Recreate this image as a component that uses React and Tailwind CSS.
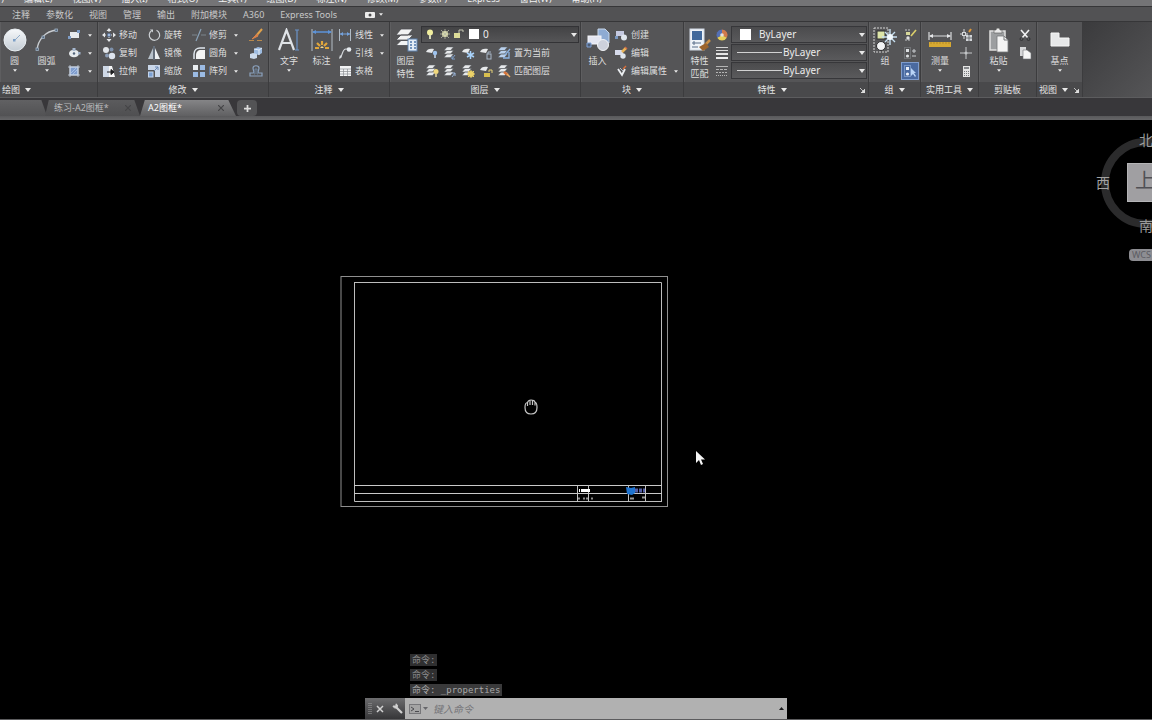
import React from 'react';
import clsx from 'clsx';

const menus = [
  '文件(F)', '编辑(E)', '视图(V)', '插入(I)', '格式(O)', '工具(T)', '绘图(D)',
  '标注(N)', '修改(M)', '参数(P)', 'Express', '窗口(W)', '帮助(H)',
];

const ribbonTabs = ['注释', '参数化', '视图', '管理', '输出', '附加模块', 'A360', 'Express Tools'];

/* ---------- shared bits ---------- */

function Arrow({ small = false, className }) {
  return (
    <svg viewBox="0 0 6 4" className={clsx('shrink-0', small ? 'w-1 h-[3px]' : 'w-[6px] h-1', className)}>
      <path d="M0 0h6L3 4z" fill="#e8e8e8" />
    </svg>
  );
}

function Icon({ children, className }) {
  return (
    <svg viewBox="0 0 14 14" className={clsx('w-[14px] h-[14px] shrink-0', className)} fill="none">
      {children}
    </svg>
  );
}

function Panel({ title, className, arrow = true, launcher = false, start = false, children }) {
  return (
    <section
      className={clsx(
        'flex flex-col shrink-0 border-r border-[#3c3c3e] shadow-[inset_1px_0_0_#5e5e60]',
        className
      )}
    >
      <div className="flex h-[60px] pt-1">{children}</div>
      <div
        className={clsx(
          'relative flex items-center gap-[5px] h-[15px] bg-[#49494b] text-[#e4e4e4] whitespace-nowrap',
          start ? 'pl-[2px]' : 'justify-center',
          launcher && !start && 'pr-2'
        )}
      >
        <span>{title}</span>
        {arrow && <Arrow />}
        {launcher && (
          <svg viewBox="0 0 5 5" className="absolute right-[3px] top-[6px] w-[5px] h-[5px]">
            <path d="M0 0l3 3M5 1v4H1z" stroke="#ddd" fill="#ddd" strokeWidth=".8" />
          </svg>
        )}
      </div>
    </section>
  );
}

function Big({ icon, label, label2, arrow = false, className }) {
  return (
    <button type="button" className={clsx('flex flex-col items-center shrink-0 leading-[13px] whitespace-nowrap', className)}>
      <span className="flex items-center justify-center h-7">{icon}</span>
      <span>{label}</span>
      {label2 && <span>{label2}</span>}
      {arrow && <Arrow small className="mt-[2px]" />}
    </button>
  );
}

function Small({ icon, label, arrow = false, name, active = false, className }) {
  return (
    <button
      type="button"
      aria-label={label || name}
      className={clsx(
        'flex items-center h-[18px] gap-[3px] whitespace-nowrap',
        active && 'bg-[#4a6aa0] shadow-[inset_0_0_0_1px_#7f9ccc]',
        className
      )}
    >
      {icon}
      {label && <span>{label}</span>}
      {arrow && <Arrow small className="ml-1" />}
    </button>
  );
}

/* ---------- draw + modify icons ---------- */

const circleIcon = (
  <svg viewBox="0 0 24 24" className="w-6 h-6" fill="none">
    <defs>
      <linearGradient id="ball" x1="0" y1="0" x2="0" y2="1">
        <stop offset="0" stopColor="#f6f8fa" />
        <stop offset="1" stopColor="#c3ccd4" />
      </linearGradient>
    </defs>
    <circle cx="12" cy="12" r="11" fill="url(#ball)" stroke="#e8eef2" />
    <path d="M11 13l6-6" stroke="#8fabc9" strokeWidth="1" />
    <rect x="10" y="11" width="2.500" height="2.500" fill="#7d9fc6" />
  </svg>
);

const arcIcon = (
  <svg viewBox="0 0 24 24" className="w-6 h-6" fill="none">
    <path d="M2 22C3 12 10 3 22 2" stroke="#c9cdd1" strokeWidth="1.400" />
    <g fill="#55677c" stroke="#9fb2c6" strokeWidth=".8">
      <rect x="1" y="20" width="2.500" height="2.500" />
      <rect x="7" y="8" width="2.500" height="2.500" />
      <rect x="20" y="1" width="2.500" height="2.500" />
    </g>
  </svg>
);

const rectIcon = (
  <Icon>
    <rect x="3" y="4" width="9" height="6" fill="#e6eaee" />
    <rect x="1" y="8" width="3" height="3" fill="#7d9cc6" />
    <rect x="10" y="2" width="3" height="3" fill="#7d9cc6" />
  </Icon>
);

const ellipseIcon = (
  <Icon>
    <ellipse cx="7" cy="7.500" rx="5" ry="3.800" fill="#e6eaee" />
    <circle cx="7" cy="7.500" r="1.200" fill="#51647a" />
    <rect x="5.500" y="2" width="3" height="3" fill="#a6b8cf" />
    <rect x="11" y="6" width="2.500" height="2.500" fill="#a6b8cf" />
  </Icon>
);

const hatchIcon = (
  <Icon>
    <rect x="3" y="3" width="8" height="8" fill="#7f9dce" stroke="#d3def0" />
    <path d="M4 9l5-5M6 10l4-4" stroke="#a6bee4" />
    <path d="M1 3h12M1 11h12M3 1v12M11 1v12" stroke="#c5d0e0" strokeWidth=".8" />
  </Icon>
);

const moveIcon = (
  <Icon>
    <path d="M7 0l2.500 3h-5zM7 14l2.500-3h-5zM0 7l3-2.500v5zM14 7l-3-2.500v5z" fill="#e8eaec" />
    <path d="M7 2v10M2 7h10" stroke="#dcdfe2" strokeDasharray="2 1" />
    <rect x="5.500" y="5.500" width="3" height="3" fill="#9fb9dd" stroke="#4d5f7b" strokeWidth=".7" />
  </Icon>
);

const rotateIcon = (
  <Icon>
    <path d="M4.500 2.800A5.200 5.200 0 1 0 9.500 2.300" stroke="#ced2d6" strokeWidth="1.200" />
    <path d="M3 1.500h3v3z" fill="#ced2d6" />
  </Icon>
);

const trimIcon = (
  <Icon>
    <path d="M0 7h5M9 7h5" stroke="#7c858e" strokeWidth="1.200" />
    <path d="M4 13L9 1" stroke="#8aa2b8" strokeWidth="1.200" />
  </Icon>
);

const copyIcon = (
  <Icon>
    <circle cx="4" cy="4" r="3" fill="#e3e6ea" />
    <circle cx="9.500" cy="3.500" r="2" fill="#7e91ab" />
    <circle cx="10" cy="10" r="3.200" fill="#dde4ee" />
    <circle cx="5" cy="9.500" r="2" fill="#8c9db5" />
  </Icon>
);

const mirrorIcon = (
  <Icon>
    <path d="M6 2v11H1z" fill="#b8c2cc" />
    <path d="M8 2v11h5z" fill="#eef1f4" />
    <path d="M7 0v14" stroke="#7f97b5" strokeWidth=".8" />
  </Icon>
);

const filletIcon = (
  <Icon>
    <path d="M2 13V8c0-4 3-6 6-6h5" stroke="#dfe6ee" strokeWidth="1.500" />
    <path d="M4 13V9c0-3 2-5 5-5h4v9z" fill="#f3f4f5" />
  </Icon>
);

const stretchIcon = (
  <Icon>
    <path d="M1 2h6v11H1z" fill="#ced8e6" />
    <path d="M7 2h3l3 11H7z" fill="#f7f7f7" />
    <path d="M5 8h4M9 5.500L12 8l-3 2.500z" stroke="#1d1d1f" fill="#1d1d1f" />
  </Icon>
);

const scaleIcon = (
  <Icon>
    <path d="M1 1h12v12H8V6H1z" fill="#c9d6e8" />
    <rect x="1.500" y="8" width="4.500" height="5" fill="#7ba0d2" stroke="#c4d5ec" />
    <path d="M7 7l4-4M8 3h3v3" stroke="#6a88b4" />
  </Icon>
);

const arrayIcon = (
  <Icon>
    <rect x="1" y="1" width="5" height="5" fill="#e8ecf0" />
    <rect x="8" y="1" width="5" height="5" fill="#9bbbe4" />
    <rect x="1" y="8" width="5" height="5" fill="#9bbbe4" />
    <rect x="8" y="8" width="5" height="5" fill="#9bbbe4" />
  </Icon>
);

const brushIcon = (
  <Icon>
    <path d="M13 1L7 8" stroke="#e0a24c" strokeWidth="2" />
    <path d="M8 6L3 11l6-3z" fill="#d9824a" stroke="#d9824a" />
    <path d="M0 12.500h5M8 12.500h5" stroke="#b8894d" />
  </Icon>
);

const explodeIcon = (
  <Icon>
    <path d="M5 3l4-2 4 1v5l-3 2-5-1z" fill="#9dbbe0" />
    <path d="M5 3l5 1v5M10 4l3-2" stroke="#e3edf8" />
    <path d="M1 8l3-1 4 1v4l-3 1-4-1z" fill="#cbdaec" />
  </Icon>
);

const offsetIcon = (
  <Icon>
    <path d="M1 12V9h3c2 0 0-3 0-5 0-3 6-3 6 0 0 2-2 5 0 5h3v3z" stroke="#8ba2be" strokeWidth="1.200" />
    <path d="M5 10h1V5h2v5h1" stroke="#6f839c" />
  </Icon>
);

/* ---------- annotate icons ---------- */

const textIcon = (
  <svg viewBox="0 0 24 24" className="w-6 h-6" fill="none">
    <path d="M2 22L9.500 2 17 22M5 15h9" stroke="#dfe3e7" strokeWidth="2.200" />
    <path d="M20 2v20M18 2h4M18 22h4" stroke="#6b93c9" strokeWidth="1.200" />
  </svg>
);

const dimIcon = (
  <svg viewBox="0 0 24 24" className="w-6 h-6" fill="none">
    <path d="M2 1v22M22 1v22" stroke="#a5adb5" strokeWidth="1.200" />
    <path d="M3 4h18" stroke="#5d93d8" strokeWidth="1.500" />
    <path d="M2 4l4-2v4zM22 4l-4-2v4z" fill="#5d93d8" />
    <path d="M12 13v4M7 15l3 3M17 15l-3 3M5 20h4M15 20h4" stroke="#e0a63c" strokeWidth="2.200" />
    <path d="M10 20l2-2 2 2z" fill="#f4d88c" />
  </svg>
);

const linearIcon = (
  <Icon>
    <path d="M1.500 1v12M12.500 1v12" stroke="#b0bbc6" />
    <path d="M2 6h10" stroke="#74a2dc" />
    <path d="M2 6l3-2v4zM12 6L9 4v4z" fill="#74a2dc" />
  </Icon>
);

const leaderIcon = (
  <Icon>
    <path d="M2 12C5 9 4 3 8 3h2" stroke="#d6dade" strokeWidth="1.200" />
    <path d="M1 13l1-4 2 2z" fill="#d6dade" />
    <circle cx="11" cy="3.500" r="2.300" fill="#e7ecf1" />
  </Icon>
);

const tableIcon = (
  <Icon>
    <rect x="2" y="2" width="11" height="10" fill="#f2f3f4" />
    <path d="M2 5h11M2 7.500h11M2 10h11M5.500 5v7M9.500 5v7" stroke="#8b8e92" strokeWidth=".7" />
  </Icon>
);

/* ---------- layer icons ---------- */

function Sheets({ fill = '#e7e9eb', children }) {
  return (
    <Icon>
      <path
        d="M4 1h6.500L7.500 4.500H1zM4 4.500h6.500l-3 3.500H1zM4 8h6.500l-3 3.500H1z"
        fill={fill}
        stroke="#55585c"
        strokeWidth=".5"
      />
      {children}
    </Icon>
  );
}

function Sheet({ children }) {
  return (
    <Icon>
      <path d="M1 6c1-3 4-4 8-3l-2 4z" fill="#e7e9eb" />
      {children}
    </Icon>
  );
}

const layerPropsIcon = (
  <svg viewBox="0 0 24 24" className="w-6 h-6" fill="none">
    <path
      d="M7 1h12l-5 6H2zM7 7h12l-5 5H2zM7 12.500h12l-5 5H2z"
      fill="#f1f2f3"
      stroke="#4b4c50"
      strokeWidth=".8"
    />
    <rect x="14" y="11" width="9" height="12" fill="#e3ecf6" stroke="#5f82ae" />
    <path d="M16 14h2M16 17h2M16 20h2M20 14h2M20 17h2M20 20h2" stroke="#4d75aa" strokeWidth="1.600" />
  </svg>
);

const layerTools = [
  {
    name: '关',
    icon: <Sheet><circle cx="10" cy="7" r="2.200" fill="#9ec3ee" /><path d="M10 9v3" stroke="#c7d9ee" strokeWidth="1.500" /></Sheet>,
  },
  { name: '隔离', icon: <Sheets><path d="M12 9l-3 4M9 10v3h3" stroke="#7f9fc9" /></Sheets> },
  {
    name: '冻结',
    icon: <Sheet><path d="M9.500 5v8M6 7l7 4M13 7l-7 4" stroke="#a8d2fa" strokeWidth="1.500" /></Sheet>,
  },
  {
    name: '锁定',
    icon: <Sheet><rect x="8" y="8" width="4" height="5" stroke="#a9b8c9" /><path d="M9 8V6h3" stroke="#a9b8c9" /></Sheet>,
  },
];

const layerTools2 = [
  {
    name: '打开所有图层',
    icon: <Sheets><circle cx="11" cy="7.500" r="2.500" fill="#f1d87c" /><path d="M11 10v3" stroke="#e6d9a3" strokeWidth="1.500" /></Sheets>,
  },
  { name: '取消隔离', icon: <Sheets><path d="M9 13l3-4M9 9h3v3" stroke="#9bb5d8" /></Sheets> },
  {
    name: '解冻所有图层',
    icon: <Sheets><circle cx="10" cy="10" r="3" fill="#ecd269" /><path d="M10 6v8M6 10h8M7 7l6 6M13 7l-6 6" stroke="#ecd269" /></Sheets>,
  },
  {
    name: '解锁',
    icon: <Sheet><path d="M5 13h6V9H5z" fill="#d8be4e" /><path d="M10 8V6h3v3" stroke="#e7d378" /></Sheet>,
  },
];

const setCurrentIcon = (
  <Sheets fill="#b9d0ec">
    <path d="M6 12h6V6M8 9l5-6" stroke="#8cb4e4" strokeWidth="1.300" />
  </Sheets>
);

const matchLayerIcon = (
  <Sheets>
    <path d="M7 8l4 3" stroke="#d8743a" strokeWidth="2.500" />
    <path d="M10 10l3 3" stroke="#e9b06b" strokeWidth="1.500" />
  </Sheets>
);

/* ---------- block + property icons ---------- */

const insertIcon = (
  <svg viewBox="0 0 24 24" className="w-6 h-6" fill="none">
    <path d="M12 1h7l4 4v10H12z" fill="#8eabd3" stroke="#c6d6ea" />
    <rect x="2" y="8" width="13" height="8" fill="#e4e6f1" stroke="#f5f6fa" />
    <circle cx="17" cy="17" r="5.500" fill="#cdd1dc" stroke="#f1f3f6" />
    <path d="M1 15h4v4H1z" fill="#4d5c74" stroke="#7fa2d8" />
  </svg>
);

const createIcon = (
  <Icon>
    <rect x="2" y="3" width="8" height="5" fill="#c5c9e0" />
    <circle cx="10" cy="9.500" r="3" fill="#e0e6ee" />
    <rect x="1" y="8" width="3" height="3" fill="#7996bf" />
  </Icon>
);

const editIcon = (
  <Icon>
    <rect x="1" y="4" width="8" height="5" fill="#d6daea" />
    <circle cx="9" cy="10" r="2.700" fill="#dfe5ed" />
    <path d="M8 6l4-4" stroke="#e9b457" strokeWidth="2.500" />
    <path d="M11 1l2 2" stroke="#d06c46" strokeWidth="1.500" />
  </Icon>
);

const attrIcon = (
  <Icon>
    <path d="M4 5l4 6 3-6" stroke="#eceff2" strokeWidth="1.800" />
    <path d="M6 4l3 3" stroke="#b2bac4" />
    <path d="M9 5l3-3" stroke="#d9703a" strokeWidth="1.500" />
  </Icon>
);

const matchPropIcon = (
  <svg viewBox="0 0 24 24" className="w-6 h-6" fill="none">
    <rect x="2" y="1" width="14" height="21" fill="#eef3f8" stroke="#d1dae5" />
    <rect x="4" y="3" width="10" height="9" fill="#41699c" />
    <path d="M4 15h9M6 13v4M4 19h6" stroke="#566c88" />
    <path d="M22 12l-5 5" stroke="#c98f45" strokeWidth="2.500" />
    <path d="M18 15l-7 4 4 4 6-4z" fill="#9c642b" />
  </svg>
);

const colorIcon = (
  <Icon>
    <path d="M7 7V1.500A5.500 5.500 0 0 1 11.800 9.800z" fill="#d0794c" />
    <path d="M7 7l4.800 2.800A5.500 5.500 0 0 1 2.200 9.800z" fill="#e7cf5a" />
    <path d="M7 7l-4.800 2.800A5.500 5.500 0 0 1 7 1.500z" fill="#5470b6" />
    <circle cx="7" cy="7" r="1.800" fill="#e5e1dd" />
  </Icon>
);

const weightIcon = (
  <Icon>
    <path d="M1 1.500h12" stroke="#d4d4d4" />
    <path d="M1 4.500h12" stroke="#dcdcdc" />
    <path d="M1 8h12" stroke="#e4e4e4" strokeWidth="2" />
    <path d="M1 12h12" stroke="#ededed" strokeWidth="2" />
  </Icon>
);

const linetypeIcon = (
  <Icon>
    <path d="M1 2.500h12" stroke="#b4b4b4" />
    <path d="M1 5.500h12" stroke="#b4b4b4" strokeDasharray="3 1" />
    <path d="M1 8.500h12" stroke="#b4b4b4" strokeDasharray="2 1" />
    <path d="M1 11.500h12" stroke="#b4b4b4" strokeDasharray="1 1" />
  </Icon>
);

/* ---------- group, utilities, clipboard, view ---------- */

const groupIcon = (
  <svg viewBox="0 0 24 26" className="w-6 h-[26px]" fill="none">
    <rect x="1" y="1" width="14" height="24" stroke="#d6d6d6" strokeDasharray="2 1" />
    <rect x="4" y="4" width="8" height="8" fill="#dde5a8" stroke="#2d2d2f" />
    <circle cx="8" cy="19" r="4.500" fill="#f2f3f4" stroke="#2d2d2f" />
    <path d="M17 2v16M9 10h15M12 5l10 10M22 5L12 15" stroke="#c7e0f2" strokeWidth="1.400" />
    <circle cx="17" cy="10" r="3" fill="#f3f9fd" />
  </svg>
);

const ungroupIcon = (
  <Icon>
    <path d="M2 2h6M2 12h5" stroke="#c4c6c8" strokeDasharray="2 1" />
    <rect x="3" y="4" width="4" height="3" fill="#d7d89a" />
    <circle cx="5" cy="10" r="1.700" fill="#e3e3e3" />
    <path d="M8 8l5-6" stroke="#dcd06a" strokeWidth="1.600" />
  </Icon>
);

const groupEditIcon = (
  <Icon>
    <rect x="1.500" y="1.500" width="6" height="11" stroke="#8e9296" strokeDasharray="1 1" />
    <rect x="3" y="3" width="3" height="3" fill="#dbdee1" />
    <circle cx="4.500" cy="10" r="1.600" fill="#dbdee1" />
    <path d="M9 5h4M11 3v4M9 10h4" stroke="#c9ccd0" />
  </Icon>
);

const groupSelectIcon = (
  <Icon>
    <rect x="1.500" y="1.500" width="6" height="11" stroke="#a7c0e6" strokeDasharray="1 1" />
    <rect x="3" y="3" width="3" height="3" fill="#e8eef7" />
    <circle cx="4.500" cy="10" r="1.600" fill="#e8eef7" />
    <path d="M8 4v8l2-2 2 3 1-1-2-3h2z" fill="#b8d4f6" />
  </Icon>
);

const measureIcon = (
  <svg viewBox="0 0 24 24" className="w-6 h-6" fill="none">
    <path d="M1 4v8M23 4v8M2 8h20" stroke="#d9dbdd" strokeWidth="1.200" />
    <path d="M1 8l4-2v4zM23 8l-4-2v4z" fill="#e5e6e8" />
    <rect x="1" y="14" width="22" height="5" fill="#d7a932" />
    <path d="M3 14v2M6 14v2M9 14v2M12 14v2M15 14v2M18 14v2M21 14v2" stroke="#b58a24" />
  </svg>
);

const quickSelectIcon = (
  <Icon>
    <path d="M5 1v10M1 6h8" stroke="#d6d8da" />
    <rect x="3.500" y="4.500" width="3" height="3" fill="#58585a" stroke="#d6d8da" />
    <path d="M10 4l2-3" stroke="#e09a3c" strokeWidth="2" />
    <rect x="7" y="7" width="6" height="6" fill="#d3d6da" />
    <path d="M7 10h6M10 7v6" stroke="#5a5d61" strokeWidth=".8" />
  </Icon>
);

const pointIcon = (
  <Icon>
    <path d="M7 1v12M1 7h12" stroke="#c7c9cb" />
    <circle cx="7" cy="7" r="1.500" fill="#c2c4c6" />
  </Icon>
);

const calcIcon = (
  <Icon>
    <rect x="4" y="2" width="7" height="11" fill="#e4e4e4" />
    <path d="M5 4h5" stroke="#66696c" strokeWidth="1.500" />
    <path d="M5 7.500h5M5 9.500h5M5 11.500h5" stroke="#77797c" strokeDasharray="1 1" />
  </Icon>
);

const pasteIcon = (
  <svg viewBox="0 0 22 26" className="w-[22px] h-[26px]" fill="none">
    <rect x="2" y="4" width="15" height="19" fill="#9c9ea0" stroke="#e0e0e0" strokeWidth="1.500" />
    <path d="M6 6V3h2a2 2 0 0 1 4 0h2v3z" fill="#e9e9e9" stroke="#555" strokeWidth=".6" />
    <path d="M9 9h7l4 4v12H9z" fill="#f4f4f4" stroke="#77797b" strokeWidth=".8" />
    <path d="M16 9v4h4" stroke="#77797b" />
  </svg>
);

const cutIcon = (
  <Icon>
    <path d="M3 2l7 8M11 2l-7 8" stroke="#eff0f1" strokeWidth="1.600" />
    <circle cx="3.500" cy="11" r="1.500" stroke="#323335" />
    <circle cx="10.500" cy="11" r="1.500" stroke="#323335" />
  </Icon>
);

const copyClipIcon = (
  <Icon>
    <path d="M2 1h6v9H2z" fill="#d7d8da" />
    <path d="M5 4h4l4 3v6H5z" fill="#f6f6f6" stroke="#707275" strokeWidth=".6" />
  </Icon>
);

const baseIcon = (
  <svg viewBox="0 0 24 24" className="w-6 h-6" fill="none">
    <path d="M3 5h8v5h10v8H3z" fill="#e7e8e9" stroke="#f7f7f7" />
  </svg>
);

/* ---------- ribbon ---------- */

function PropertySelect({ label, line = false }) {
  return (
    <div className="relative h-[18px] pb-px">
      <select
        aria-label={label}
        className={clsx(
          'appearance-none block w-full h-full text-[10px] leading-[15px] text-[#ececec] bg-linear-to-b from-[#4b4b4d] to-[#5a5a5c] border border-[#37373a] outline-none',
          line ? 'pl-[51px]' : 'pl-[27px]'
        )}
      >
        <option>ByLayer</option>
      </select>
      {line ? (
        <span className="absolute left-[6px] top-2 w-[45px] h-px bg-[#d2d2d2] pointer-events-none" />
      ) : (
        <span className="absolute left-[9px] top-[3px] w-[11px] h-[11px] bg-white pointer-events-none" />
      )}
      <Arrow className="absolute right-[2px] top-[7px] pointer-events-none" />
    </div>
  );
}

function Ribbon() {
  return (
    <div className="flex shrink-0 overflow-hidden bg-[#555557] text-[#dedede]">
      <Panel title="绘图" start className="w-[98px]">
        <Big icon={circleIcon} label="圆" arrow className="w-[29px]" />
        <Big icon={arcIcon} label="圆弧" arrow className="w-[35px]" />
        <div className="pl-[3px]">
          <Small name="矩形" icon={rectIcon} arrow />
          <Small name="椭圆" icon={ellipseIcon} arrow />
          <Small name="图案填充" icon={hatchIcon} arrow />
        </div>
      </Panel>

      <Panel title="修改" className="w-[171px]">
        <div className="w-[49px] pl-1">
          <Small label="移动" icon={moveIcon} />
          <Small label="复制" icon={copyIcon} />
          <Small label="拉伸" icon={stretchIcon} />
        </div>
        <div className="w-[45px]">
          <Small label="旋转" icon={rotateIcon} />
          <Small label="镜像" icon={mirrorIcon} />
          <Small label="缩放" icon={scaleIcon} />
        </div>
        <div className="w-[57px]">
          <Small label="修剪" icon={trimIcon} arrow />
          <Small label="圆角" icon={filletIcon} arrow />
          <Small label="阵列" icon={arrayIcon} arrow />
        </div>
        <div>
          <Small name="删除" icon={brushIcon} />
          <Small name="分解" icon={explodeIcon} />
          <Small name="偏移" icon={offsetIcon} />
        </div>
      </Panel>

      <Panel title="注释" className="w-[121px]">
        <Big icon={textIcon} label="文字" arrow className="w-10" />
        <Big icon={dimIcon} label="标注" className="w-[25px]" />
        <div className="pl-1">
          <Small label="线性" icon={linearIcon} arrow />
          <Small label="引线" icon={leaderIcon} arrow />
          <Small label="表格" icon={tableIcon} />
        </div>
      </Panel>

      <Panel title="图层" className="w-[191px]">
        <Big icon={layerPropsIcon} label="图层" label2="特性" className="w-[31px]" />
        <div className="grow pr-px">
          <div className="relative h-[18px] pb-px">
            <select
              aria-label="图层"
              className="appearance-none block w-full h-full pl-[61px] text-[10px] leading-[15px] text-[#ececec] bg-linear-to-b from-[#434345] to-[#555557] border border-[#333336] outline-none"
            >
              <option>0</option>
            </select>
            <svg viewBox="0 0 60 16" className="absolute left-0 top-0 w-[60px] h-4 pointer-events-none" fill="none">
              <circle cx="9" cy="6.500" r="3" fill="#f0ee9e" />
              <rect x="8" y="9" width="2" height="4" fill="#d4d6b4" />
              <circle cx="24" cy="8" r="3" fill="#e8e9b2" />
              <path d="M24 3v10M19 8h10M20 4l8 8M28 4l-8 8" stroke="#b9bba6" strokeWidth=".8" />
              <rect x="33" y="7" width="6" height="5" fill="#dddc98" />
              <path d="M38 7V4h4v2" stroke="#c5c6b2" />
              <rect x="48" y="3" width="10" height="10" fill="#fff" />
            </svg>
            <Arrow className="absolute right-[2px] top-[7px] pointer-events-none" />
          </div>
          <div className="flex gap-1 pl-1">
            {layerTools.map((t) => (
              <Small key={t.name} name={t.name} icon={t.icon} />
            ))}
            <Small label="置为当前" icon={setCurrentIcon} />
          </div>
          <div className="flex gap-1 pl-1">
            {layerTools2.map((t) => (
              <Small key={t.name} name={t.name} icon={t.icon} />
            ))}
            <Small label="匹配图层" icon={matchLayerIcon} />
          </div>
        </div>
      </Panel>

      <Panel title="块" className="w-[103px]">
        <Big icon={insertIcon} label="插入" className="w-[33px]" />
        <div>
          <Small label="创建" icon={createIcon} />
          <Small label="编辑" icon={editIcon} />
          <Small label="编辑属性" icon={attrIcon} arrow />
        </div>
      </Panel>

      <Panel title="特性" launcher className="w-[185px]">
        <Big icon={matchPropIcon} label="特性" label2="匹配" className="w-[31px]" />
        <div>
          <Small name="对象颜色" icon={colorIcon} />
          <Small name="线宽" icon={weightIcon} />
          <Small name="线型" icon={linetypeIcon} />
        </div>
        <div className="grow pl-[2px] pr-px">
          <PropertySelect label="对象颜色" />
          <PropertySelect label="线宽" line />
          <PropertySelect label="线型" line />
        </div>
      </Panel>

      <Panel title="组" className="w-[52px]">
        <Big icon={groupIcon} label="组" className="w-8" />
        <div>
          <Small name="解除编组" icon={ungroupIcon} className="w-[18px] justify-center" />
          <Small name="组编辑" icon={groupEditIcon} className="w-[18px] justify-center" />
          <Small name="启用组选择" icon={groupSelectIcon} active className="w-[18px] justify-center" />
        </div>
      </Panel>

      <Panel title="实用工具" className="w-[58px]">
        <Big icon={measureIcon} label="测量" arrow className="w-[38px]" />
        <div>
          <Small name="快速选择" icon={quickSelectIcon} />
          <Small name="点坐标" icon={pointIcon} />
          <Small name="快速计算器" icon={calcIcon} />
        </div>
      </Panel>

      <Panel title="剪贴板" arrow={false} className="w-[58px]">
        <Big icon={pasteIcon} label="粘贴" arrow className="w-[39px]" />
        <div>
          <Small name="剪切" icon={cutIcon} />
          <Small name="复制剪裁" icon={copyClipIcon} />
        </div>
      </Panel>

      <Panel title="视图" launcher start className="w-[46px]">
        <Big icon={baseIcon} label="基点" arrow className="w-full" />
      </Panel>

      <div className="grow bg-linear-to-br from-[#3b3b3d] to-[#555557]" />
    </div>
  );
}

/* ---------- document tabs ---------- */

function DocTabs() {
  return (
    <nav className="shrink-0 bg-[#38373a] border-t border-[#5c5c5e] text-[#b9b9bb]">
      <div className="flex h-[18px] pt-[2px]">
        <button type="button" aria-label="上一图形" className="w-[47px] bg-linear-to-b from-[#616163] to-[#525254] [clip-path:polygon(0_0,88%_0,100%_100%,0_100%)]" />
        <div className="flex items-center justify-between w-[95px] pl-[9px] pr-[9px] -ml-[2px] bg-linear-to-b from-[#5b5b5d] to-[#4f4f51] [clip-path:polygon(4%_0,94%_0,100%_100%,0_100%)]">
          <a href="#practice">练习-A2图框*</a>
          <CloseMark />
        </div>
        <div className="flex items-center justify-between w-[96px] pl-2 pr-3 bg-linear-to-b from-[#858587] to-[#606062] text-white [clip-path:polygon(5%_0,92%_0,100%_100%,0_100%)]">
          <a href="#a2">A2图框*</a>
          <CloseMark />
        </div>
        <button type="button" aria-label="新图形" className="flex items-center justify-center w-5 ml-px bg-[#535355] rounded-sm">
          <svg viewBox="0 0 8 8" className="w-[7px] h-[7px]">
            <path d="M4 0v8M0 4h8" stroke="#dcdcdc" strokeWidth="2" />
          </svg>
        </button>
      </div>
      <div className="h-1 bg-linear-to-b from-[#59595b] to-[#666668]" />
    </nav>
  );
}

function CloseMark() {
  return (
    <button type="button" aria-label="关闭">
      <svg viewBox="0 0 6 6" className="w-[6px] h-[6px]">
        <path d="M0 0l6 6M6 0L0 6" stroke="#454547" strokeWidth="1.200" />
      </svg>
    </button>
  );
}

/* ---------- model space ---------- */

function Sheet2D() {
  return (
    <svg viewBox="0 0 328 232" className="absolute left-[340px] top-[156px] w-[328px] h-[232px]" fill="none">
      <rect x="1" y=".5" width="326.500" height="230" stroke="#8f8f8f" />
      <path d="M14.500 6v219.500H322M14 6.500h307.500V226" stroke="#bdbdbd" />
      <path d="M14 209.500h308M14 217.500h308" stroke="#c9c9c9" />
      <path d="M237.500 209v17M248.500 209v17M288.500 209v17M305.500 209v17" stroke="#c2c2c2" />
      {/* title block lettering is far below legible size at this zoom */}
      <path d="M239 214.500h1M241 214.500h9" stroke="#fff" strokeWidth="3" />
      <path d="M238 222.500h2M243 222.500h6M251 222.500h3" stroke="#8c8c8c" strokeWidth="2" strokeDasharray="2 1" />
      <path d="M295 214.500h10" stroke="#5560a8" strokeWidth="4" strokeDasharray="3 1" />
      <path d="M286 211l5 1 4-1v6l-3 2-5-1z" fill="#1f74d0" />
      <path d="M290 222.500h4M302 221.500h3" stroke="#9a9a9a" strokeWidth="2" />
    </svg>
  );
}

function ViewCube() {
  return (
    <div className="absolute right-0 top-0 w-[60px] h-[150px] overflow-hidden">
      <svg viewBox="0 0 60 150" className="absolute inset-0" fill="none">
        <circle cx="54" cy="63" r="41" stroke="#2b2b2c" strokeWidth="8" />
      </svg>
      <span className="absolute left-[47px] top-3 text-[14px] leading-4 text-[#9b9b9b]">北</span>
      <span className="absolute left-1 top-[55px] text-[14px] leading-4 text-[#a2a2a2]">西</span>
      <span className="absolute left-[47px] top-[98px] text-[14px] leading-4 text-[#9b9b9b]">南</span>
      <button
        type="button"
        className="absolute left-[35px] top-[43px] w-10 h-[39px] pl-2 pb-1 text-left text-[20px] leading-none bg-[#a09fa2] text-[#505055] shadow-[inset_0_0_0_1px_#b4b4b6]"
      >
        上
      </button>
      <button type="button" className="absolute left-[37px] top-[129px] w-10 h-3 pl-[3px] rounded-sm text-left text-[9px] leading-3 bg-[#8d8d92] text-[#5c5c62]">
        WCS
      </button>
    </div>
  );
}

function CommandLine() {
  return (
    <div className="absolute left-[365px] bottom-0 w-[422px]">
      <ul className="flex flex-col items-start gap-[3px] pl-[45px] pb-[2px] font-['DejaVu_Sans_Mono','Noto_Sans_CJK_SC',monospace] text-[9px] leading-3 text-[#8d8d8d]">
        <li className="px-[2px] bg-[#2f2f30]">命令:</li>
        <li className="px-[2px] bg-[#2f2f30]">命令:</li>
        <li className="px-[2px] bg-[#3a3a3b] text-[#a8a8a8]">命令: _properties</li>
      </ul>
      <form className="flex h-[21px] bg-[#b1b1b1]" onSubmit={(e) => e.preventDefault()}>
        <div className="flex items-center w-10 pl-[3px] gap-1 bg-linear-to-b from-[#6d6d6f] to-[#363638]">
          <svg viewBox="0 0 4 12" className="w-1 h-3">
            <path d="M1 0v12M3 0v12" stroke="#a0a0a0" strokeDasharray="1 1" />
          </svg>
          <button type="button" aria-label="关闭命令行">
            <svg viewBox="0 0 8 8" className="w-2 h-2">
              <path d="M1 1l6 6M7 1L1 7" stroke="#d2d2d2" strokeWidth="1.500" />
            </svg>
          </button>
          <button type="button" aria-label="自定义" className="ml-1">
            <svg viewBox="0 0 12 12" className="w-3 h-3" fill="none">
              <path d="M4 4l6 6" stroke="#d0d0d0" strokeWidth="2.200" />
              <path d="M1 3a2.500 2.500 0 0 0 4 1.500A2.500 2.500 0 0 0 4 .8L4 3z" fill="#d0d0d0" stroke="#d0d0d0" />
            </svg>
          </button>
        </div>
        <button type="button" aria-label="最近的命令" className="flex items-center gap-[2px] pl-1">
          <svg viewBox="0 0 12 10" className="w-3 h-[10px]" fill="none">
            <rect x=".5" y=".5" width="11" height="9" fill="#a4a4a4" stroke="#77777a" />
            <path d="M2 3l3 2-3 2M6 7.500h4" stroke="#4c4c50" />
          </svg>
          <svg viewBox="0 0 5 3" className="w-[5px] h-[3px]">
            <path d="M0 0h5L2.500 3z" fill="#66666a" />
          </svg>
        </button>
        <input
          aria-label="命令"
          placeholder="键入命令"
          className="grow min-w-0 pl-[5px] text-[10px] italic bg-transparent outline-none placeholder:text-[#747478]"
        />
        <button type="button" aria-label="命令历史" className="pr-[3px]">
          <svg viewBox="0 0 5 3" className="w-[5px] h-[3px]">
            <path d="M0 3h5L2.500 0z" fill="#1b1b1d" />
          </svg>
        </button>
      </form>
    </div>
  );
}

export default function App() {
  return (
    <div className="flex flex-col h-screen overflow-hidden bg-black font-['Noto_Sans','Noto_Sans_CJK_SC',sans-serif] text-[9px] leading-3 select-none">
      {/* menu bar, scrolled mostly out of the frame */}
      <header className="flex items-end h-[6px] shrink-0 overflow-hidden bg-[#747476] text-[#f2f2f2] leading-[14px]">
        <div className="flex gap-5 -ml-6 whitespace-nowrap">
          {menus.map((m) => (
            <button key={m} type="button">{m}</button>
          ))}
        </div>
      </header>

      <nav className="flex items-center h-4 shrink-0 pt-px pl-3 gap-4 bg-[#525254] border-y border-[#363638] text-[#c8c8c8] whitespace-nowrap">
        {ribbonTabs.map((t) => (
          <a key={t} href={`#${t}`}>{t}</a>
        ))}
        <button type="button" aria-label="最小化功能区" className="flex items-center gap-1 ml-3">
          <svg viewBox="0 0 10 6" className="w-[10px] h-[6px]">
            <rect width="10" height="6" rx="1" fill="#ececec" />
            <circle cx="5" cy="3" r="1.500" fill="#4a4a4c" />
          </svg>
          <Arrow small />
        </button>
      </nav>

      <Ribbon />
      <DocTabs />

      <main className="relative grow bg-black overflow-hidden border-b border-[#5c5c5e]">
        <Sheet2D />
        <ViewCube />

        {/* pan cursor */}
        <svg viewBox="0 0 14 18" className="absolute left-[524px] top-[278px] w-[14px] h-[18px]" fill="none">
          <path
            d="M3.500 8V4.500C2 4.500 1 6.500 1 9.500 1 13.500 3 16 7 16s6-2.500 6-6.500c0-3-.5-5-2-5.500C10.500 2.500 9 2 7 2S4 2.800 3.500 4.500M6 2.500V7M8.500 2.500V7M11 4v3.500"
            stroke="#c6c6c6"
            strokeWidth="1.200"
          />
        </svg>

        <svg viewBox="0 0 10 16" className="absolute left-[695px] top-[330px] w-[10px] h-4">
          <path d="M1 1v12l3-3 2 5 2-1-2-4.500h4z" fill="#f5f5f5" />
        </svg>

        <CommandLine />
      </main>
    </div>
  );
}
